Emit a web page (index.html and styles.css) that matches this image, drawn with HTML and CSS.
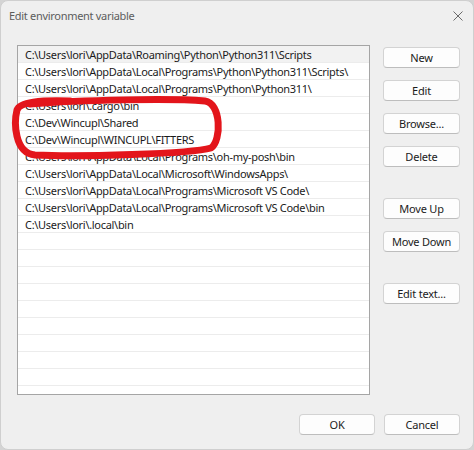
FILE: index.html
```html
<!DOCTYPE html>
<html lang="en">
<head>
<meta charset="UTF-8" />
<title>Edit environment variable</title>
<link rel="stylesheet" href="styles.css">
</head>
<body>
  <div class="window">
    <div class="titlebar">
      <span class="title">Edit environment variable</span>
      <svg class="close" width="10" height="10" viewBox="0 0 10 10">
        <path d="M0.5 0.5 L9.5 9.5 M9.5 0.5 L0.5 9.5" stroke="#6a6a6a" stroke-width="1" fill="none" />
      </svg>
    </div>

    <div class="content">
      <div class="list">
        <div class="row selected">C:\Users\lori\AppData\Roaming\Python\Python311\Scripts</div>
        <div class="row">C:\Users\lori\AppData\Local\Programs\Python\Python311\Scripts\</div>
        <div class="row">C:\Users\lori\AppData\Local\Programs\Python\Python311\</div>
        <div class="row">C:\Users\lori\.cargo\bin</div>
        <div class="row">C:\Dev\Wincupl\Shared</div>
        <div class="row">C:\Dev\Wincupl\WINCUPL\FITTERS</div>
        <div class="row">C:\Users\lori\AppData\Local\Programs\oh-my-posh\bin</div>
        <div class="row">C:\Users\lori\AppData\Local\Microsoft\WindowsApps\</div>
        <div class="row">C:\Users\lori\AppData\Local\Programs\Microsoft VS Code\</div>
        <div class="row">C:\Users\lori\AppData\Local\Programs\Microsoft VS Code\bin</div>
        <div class="row">C:\Users\lori\.local\bin</div>
        <div class="row"></div>
        <div class="row"></div>
        <div class="row"></div>
        <div class="row"></div>
        <div class="row"></div>
        <div class="row"></div>
        <div class="row"></div>
        <div class="row"></div>
        <div class="row"></div>
        <div class="row"></div>
      </div>

      <div class="side">
        <button>New</button>
        <button>Edit</button>
        <button>Browse...</button>
        <button>Delete</button>
        <button class="spaced">Move Up</button>
        <button>Move Down</button>
        <button class="spaced">Edit text...</button>
      </div>
    </div>

    <div class="footer">
      <button>OK</button>
      <button>Cancel</button>
    </div>

    <!-- hand-drawn red marker around the two Wincupl entries -->
    <svg class="marker" width="474" height="450" viewBox="0 0 474 450">
      <path d="M30 104 C80 100, 170 98, 205 101 C221 103, 222 140, 211 148 C190 154, 80 157, 35 155 C14 153, 14 122, 17 110 C20 102, 40 100, 70 101"
            stroke="#e3151b" stroke-width="7" fill="none" stroke-linecap="round" stroke-linejoin="round" />
    </svg>
  </div>
</body>
</html>
```

FILE: styles.css
```css
/* Reset and base */
* {
  box-sizing: border-box;
}

html {
  background: #d4d4d4;
}

body {
  margin: 0;
  font-family: 'Noto Sans', 'Open Sans', sans-serif;
  font-size: 11px;
  letter-spacing: -0.3px;
  color: #1b1b1b;
}

.window {
  position: relative;
  width: 474px;
  height: 450px;
  background: #efefef;
  border: 1px solid #cfcfcf;
  border-radius: 8px;
  display: flex;
  flex-direction: column;
  overflow: hidden;
}

/* Title bar */
.titlebar {
  height: 29px;
  padding: 0 10px 0 8px;
  display: flex;
  align-items: center;
  justify-content: space-between;
}

.title {
  color: #5c5c5c;
}

/* List + buttons */
.content {
  display: flex;
  gap: 13px;
  padding: 15px 13px 0 16px;
}

.list {
  width: 353px;
  height: 350px;
  background: #fff;
  border: 1px solid #a5a5a5;
  overflow: hidden;
}

.row {
  height: 17px;
  line-height: 17px;
  padding-left: 7px;
  border-bottom: 1px solid #ececec;
  white-space: nowrap;
}

.row.selected {
  background: #f2f2f2;
}

.side {
  width: 77px;
  display: flex;
  flex-direction: column;
  gap: 12px;
  padding-top: 2px;
}

button {
  width: 77px;
  height: 21px;
  padding: 0;
  font-family: inherit;
  font-size: 11px;
  letter-spacing: -0.2px;
  color: #1b1b1b;
  background: #fdfdfd;
  border: 1px solid #d3d3d3;
  border-bottom-color: #bdbdbd;
  border-radius: 4px;
}

.side .spaced {
  margin-top: 19px;
}

/* Footer */
.footer {
  display: flex;
  justify-content: flex-end;
  gap: 9px;
  padding: 19px 13px 0 0;
}

.footer button {
  width: 76px;
}

.marker {
  position: absolute;
  top: -1px;
  left: -1px;
  pointer-events: none;
}
```
